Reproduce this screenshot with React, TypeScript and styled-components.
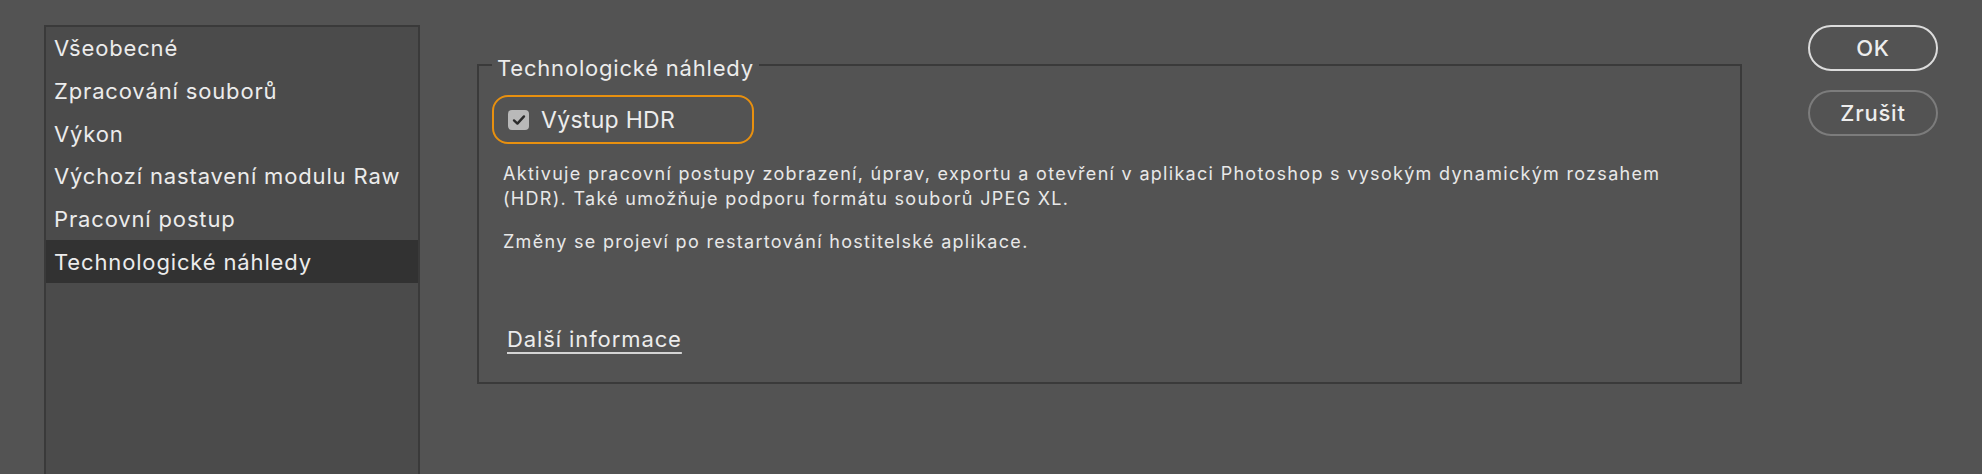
import React from "react";
import styled, { createGlobalStyle } from "styled-components";

const GlobalStyle = createGlobalStyle`
  html, body {
    margin: 0;
    padding: 0;
    height: 100%;
    background: #535353;
    overflow: hidden;
  }
  body {
    font-family: Inter, "Noto Sans", "Liberation Sans", sans-serif;
    color: #e4e4e4;
    -webkit-font-smoothing: antialiased;
  }
`;

const menuItems = [
  "Všeobecné",
  "Zpracování souborů",
  "Výkon",
  "Výchozí nastavení modulu Raw",
  "Pracovní postup",
  "Technologické náhledy",
];

export default function App() {
  const active = "Technologické náhledy";
  return (
    <>
      <GlobalStyle />
      <Dialog>
        <Sidebar>
          {menuItems.map((item) => (
            <MenuItem key={item} selected={item === active}>
              {item}
            </MenuItem>
          ))}
        </Sidebar>

        <Panel>
          <Legend>Technologické náhledy</Legend>
          <CheckRow>
            <CheckBox>
              <svg width="14" height="12" viewBox="0 0 14 12">
                <path
                  d="M2 6.4 L5.4 9.6 L12 2.4"
                  fill="none"
                  stroke="#2c2c2c"
                  strokeWidth="2.4"
                  strokeLinecap="round"
                  strokeLinejoin="round"
                />
              </svg>
            </CheckBox>
            <CheckLabel>Výstup HDR</CheckLabel>
          </CheckRow>
          <Description>
            Aktivuje pracovní postupy zobrazení, úprav, exportu a otevření v
            aplikaci Photoshop s vysokým dynamickým rozsahem
            <br />
            (HDR). Také umožňuje podporu formátu souborů JPEG XL.
          </Description>
          <Description spaced>
            Změny se projeví po restartování hostitelské aplikace.
          </Description>
          <MoreLink href="#">Další informace</MoreLink>
        </Panel>

        <Actions>
          <PillButton primary>OK</PillButton>
          <PillButton>Zrušit</PillButton>
        </Actions>
      </Dialog>
    </>
  );
}

const Dialog = styled.div`
  display: flex;
  align-items: flex-start;
  padding: 25px 44px 0 44px;
  height: 474px;
  box-sizing: border-box;
`;

const Sidebar = styled.nav`
  width: 376px;
  height: 470px;
  flex-shrink: 0;
  box-sizing: border-box;
  background: #4b4b4b;
  border: 2px solid #3a3a3a;
  display: flex;
  flex-direction: column;
`;

const MenuItem = styled.div<{ selected?: boolean }>`
  height: 42.7px;
  display: flex;
  align-items: center;
  padding-left: 8px;
  font-size: 22px;
  letter-spacing: 0.85px;
  color: #ececec;
  background: ${(p) => (p.selected ? "#323232" : "transparent")};
  white-space: nowrap;
`;

const Panel = styled.fieldset`
  margin: 24px 0 0 57px;
  width: 1265px;
  box-sizing: border-box;
  border: 2px solid #3a3a3a;
  padding: 14px 13px 30px 13px;
  display: flex;
  flex-direction: column;
  align-items: flex-start;
`;

const Legend = styled.legend`
  padding: 6px 5px 0 5px;
  font-size: 22px;
  letter-spacing: 0.8px;
  line-height: 26px;
  color: #ececec;
`;

const CheckRow = styled.label`
  display: flex;
  align-items: center;
  gap: 12px;
  width: 262px;
  height: 49px;
  box-sizing: border-box;
  padding-left: 14px;
  border: 2px solid #e8900f;
  border-radius: 16px;
`;

const CheckBox = styled.span`
  width: 21px;
  height: 20px;
  border-radius: 4px;
  background: #b9b9b9;
  display: flex;
  align-items: center;
  justify-content: center;
`;

const CheckLabel = styled.span`
  font-size: 23px;
  letter-spacing: 0.3px;
  color: #ececec;
`;

const Description = styled.p<{ spaced?: boolean }>`
  margin: ${(p) => (p.spaced ? "18px" : "17px")} 0 0 11px;
  font-size: 18px;
  letter-spacing: 1.3px;
  line-height: 25px;
  color: #e8e8e8;
  white-space: nowrap;
`;

const MoreLink = styled.a`
  margin: 72px 0 0 15px;
  font-size: 22px;
  letter-spacing: 0.9px;
  line-height: 26px;
  color: #ececec;
  text-decoration: underline;
  text-decoration-color: #d4d4d4;
  text-decoration-thickness: 2px;
  text-underline-offset: 5px;
`;

const Actions = styled.div`
  margin-left: 66px;
  display: flex;
  flex-direction: column;
  gap: 19px;
`;

const PillButton = styled.button<{ primary?: boolean }>`
  width: 130px;
  height: 46px;
  border-radius: 23px;
  background: transparent;
  border: 2px solid ${(p) => (p.primary ? "#dcdcdc" : "#7c7c7c")};
  color: #ededed;
  font-family: inherit;
  font-size: 22px;
  font-weight: 500;
  letter-spacing: 0.8px;
  padding: 0;
`;
